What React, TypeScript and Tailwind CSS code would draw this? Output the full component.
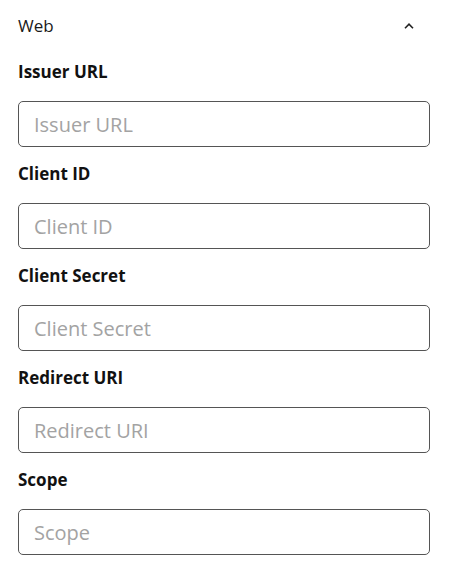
import React from 'react';

const fields = ['Issuer URL', 'Client ID', 'Client Secret', 'Redirect URI', 'Scope'];

function Field({ label }: { label: string }) {
  return (
    <div className="flex flex-col">
      <label className="text-[17px] leading-[24px] font-bold text-[#111]">{label}</label>
      <input
        type="text"
        placeholder={label}
        className="mt-[17px] h-[46px] w-[412px] rounded-[5px] border border-[#555] bg-white px-[15px] text-[20px] text-[#222] placeholder:text-[#a3a3a3] outline-none"
      />
    </div>
  );
}

export default function App() {
  return (
    <div className="min-h-[586px] bg-white px-[18px] pt-[14px]" style={{ fontFamily: '"Open Sans", sans-serif' }}>
      <div className="flex w-[412px] items-center justify-between">
        <span className="text-[17px] leading-[24px] text-[#1a1a1a]">Web</span>
        <svg width="10" height="6" viewBox="0 0 10 6" className="mr-[16px]">
          <path d="M1 5.2 L5 1.2 L9 5.2" fill="none" stroke="#222" strokeWidth="1.6" />
        </svg>
      </div>
      <div className="mt-[22px] flex flex-col gap-[15px]">
        {fields.map((f) => (
          <Field key={f} label={f} />
        ))}
      </div>
    </div>
  );
}
